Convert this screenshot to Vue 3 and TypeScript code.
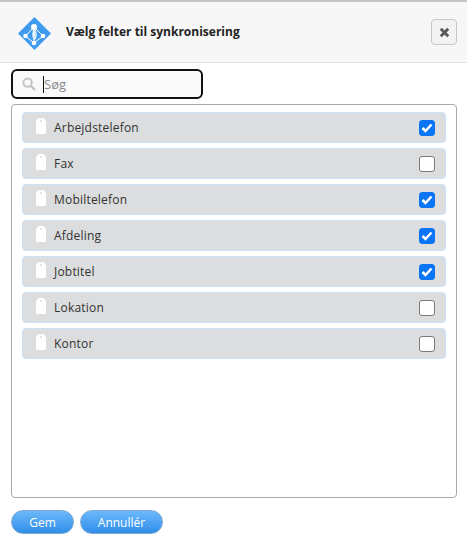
<script setup lang="ts">
interface Field {
  name: string
  checked: boolean
}

const fields: Field[] = [
  { name: 'Arbejdstelefon', checked: true },
  { name: 'Fax', checked: false },
  { name: 'Mobiltelefon', checked: true },
  { name: 'Afdeling', checked: true },
  { name: 'Jobtitel', checked: true },
  { name: 'Lokation', checked: false },
  { name: 'Kontor', checked: false }
]
</script>

<template>
  <div class="dialog">
    <header class="head">
      <svg class="logo" width="33" height="33" viewBox="0 0 33 33">
        <path d="M16.5 0 L33 16.5 L16.5 33 L0 16.5 Z" fill="#3f9bf0" />
        <path d="M16.5 11 Q11.5 17 16.5 24 Q21.5 17 16.5 11 Z" fill="#cfe7fc" />
        <path d="M16 10 L7.5 19 L16 26 L25 19 Z M16 10 V26" fill="none" stroke="#fff" stroke-width="1" />
        <circle cx="16" cy="10" r="3" fill="#fff" />
        <circle cx="7.5" cy="19" r="2.3" fill="#fff" />
        <circle cx="25" cy="19" r="2.3" fill="#fff" />
        <circle cx="16" cy="26" r="2.3" fill="#fff" />
      </svg>
      <h1 class="title">Vælg felter til synkronisering</h1>
      <button class="close" type="button" aria-label="Luk">
        <svg width="11" height="11" viewBox="0 0 11 11">
          <path d="M1.8 1.8 L9.2 9.2 M9.2 1.8 L1.8 9.2" stroke="#5a5a5a" stroke-width="3" />
        </svg>
      </button>
    </header>

    <main class="content">
      <div class="search">
        <svg class="search-icon" width="14" height="14" viewBox="0 0 14 14">
          <circle cx="5.6" cy="5.6" r="4.2" fill="none" stroke="#c4c4c4" stroke-width="2" />
          <path d="M8.8 8.8 L13 13" stroke="#c4c4c4" stroke-width="2.4" />
        </svg>
        <span class="caret"></span>
        <span class="placeholder">Søg</span>
      </div>

      <div class="list">
        <div v-for="field in fields" :key="field.name" class="row">
          <svg class="tag" width="10" height="16" viewBox="0 0 10 16">
            <path d="M3 0 H7 Q8 0 8.6 1 L10 3.5 V15 Q10 16 9 16 H1 Q0 16 0 15 V3.5 L1.4 1 Q2 0 3 0 Z" fill="#fff" />
            <circle cx="5" cy="3" r="1" fill="#d9dadc" />
          </svg>
          <span class="name">{{ field.name }}</span>
          <span class="box" :class="{ on: field.checked }">
            <svg v-if="field.checked" width="12" height="10" viewBox="0 0 12 10">
              <path d="M1.5 5 L4.5 8 L10.5 1.5" fill="none" stroke="#fff" stroke-width="2.5" />
            </svg>
          </span>
        </div>
      </div>

      <div class="actions">
        <button class="btn gem" type="button">Gem</button>
        <button class="btn cancel" type="button">Annullér</button>
      </div>
    </main>
  </div>
</template>

<style scoped>
.dialog {
  width: 467px;
  height: 546px;
  box-sizing: border-box;
  border-top: 2px solid #c4c4c4;
  font-family: "Open Sans", sans-serif;
  background: #fff;
  overflow: hidden;
}

.head {
  height: 61px;
  box-sizing: border-box;
  display: flex;
  align-items: center;
  padding: 0 10px 0 18px;
  background: #f7f7f7;
  border-bottom: 1px solid #dfe3e8;
}

.logo {
  flex: none;
  margin: 2px 15px 0 0;
}

.title {
  flex: 1;
  margin: 0 0 2px;
  font-size: 12px;
  font-weight: 700;
  color: #222;
}

.close {
  width: 26px;
  height: 26px;
  padding: 0;
  display: flex;
  align-items: center;
  justify-content: center;
  background: #f3f3f3;
  border: 1px solid #c8c8c8;
  border-radius: 4px;
}

.content {
  padding: 6px 10px 0 11px;
}

.search {
  width: 192px;
  height: 30px;
  box-sizing: border-box;
  display: flex;
  align-items: center;
  padding-left: 9px;
  background: #fafafa;
  border: 2px solid #111;
  border-radius: 6px;
}

.search-icon {
  flex: none;
  margin-right: 7px;
}

.caret {
  width: 1px;
  height: 17px;
  background: #111;
}

.placeholder {
  font-size: 13px;
  color: #8a8a8a;
}

.list {
  height: 394px;
  box-sizing: border-box;
  margin-top: 5px;
  padding: 7px 10px;
  display: flex;
  flex-direction: column;
  gap: 5px;
  border: 1px solid #a9a9a9;
  border-radius: 4px;
}

.row {
  height: 31px;
  box-sizing: border-box;
  display: flex;
  align-items: center;
  padding: 0 10px 0 13px;
  background: #dcddde;
  border: 1px solid #c9e2fb;
  border-radius: 4px;
}

.tag {
  flex: none;
  margin: -4px 8px 0 0;
}

.name {
  flex: 1;
  font-size: 12px;
  letter-spacing: 0.2px;
  color: #333;
}

.box {
  width: 16px;
  height: 16px;
  box-sizing: border-box;
  display: flex;
  align-items: center;
  justify-content: center;
  background: #fff;
  border: 1px solid #7a7a7a;
  border-radius: 3px;
}

.box.on {
  background: #0b76f5;
  border-color: #0b76f5;
}

.actions {
  display: flex;
  gap: 6px;
  margin-top: 12px;
}

.btn {
  height: 24px;
  padding: 0;
  font-family: inherit;
  font-size: 12px;
  color: #fff;
  background: linear-gradient(#6cb9fb, #2f8de8);
  border: 1px solid #7fa9d0;
  border-radius: 12px;
}

.gem {
  width: 63px;
}

.cancel {
  width: 83px;
}
</style>

<style>
html,
body {
  margin: 0;
  background: #fff;
}
</style>
